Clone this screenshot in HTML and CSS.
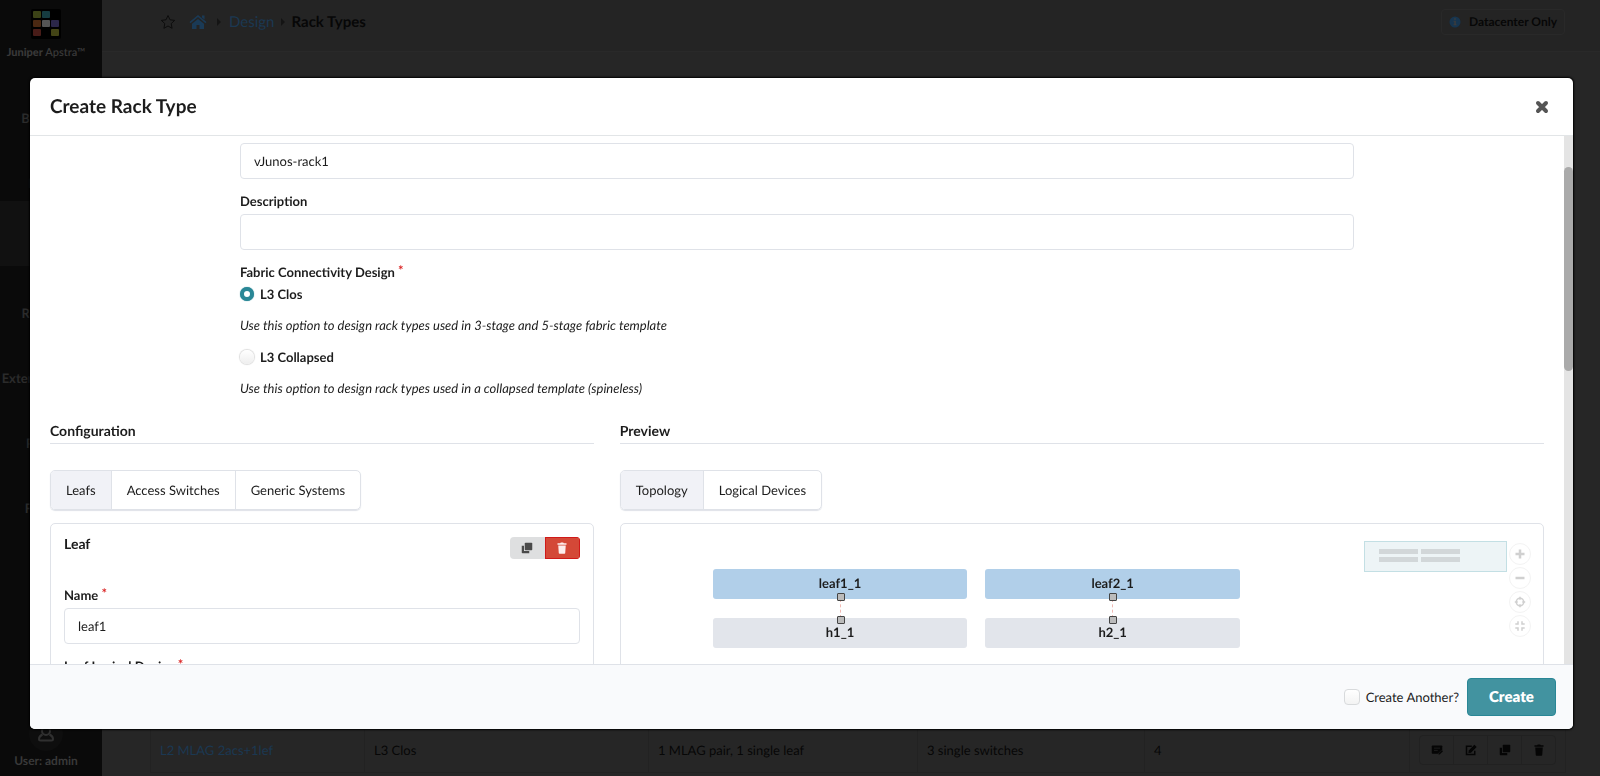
FILE: index.html
```html
<!DOCTYPE html>
<html lang="en">
<head>
  <meta charset="utf-8">
  <title>Create Rack Type</title>
  <link rel="stylesheet" href="styles.css">
</head>
<body>

  <svg class="sprite" aria-hidden="true">
    <symbol id="clone" viewBox="0 0 16 16">
      <rect x="5" y="1" width="10" height="10" rx="1"/>
      <path d="M1 5h3v7h7v3H2a1 1 0 0 1-1-1z"/>
    </symbol>
    <symbol id="trash" viewBox="0 0 16 16">
      <path d="M2 1.500h3.500l1-1h3l1 1H14v2H2zM3 4.500h10l-.7 10a1 1 0 0 1-1 1H4.700a1 1 0 0 1-1-1z"/>
    </symbol>
  </svg>

  <!-- Page behind the dialog -->
  <div class="page">
    <nav class="sidebar">
      <div class="brand">
        <svg class="logo" viewBox="0 0 30 30">
          <rect width="30" height="30" rx="2" fill="#000"/>
          <rect x="2" y="2" width="8" height="7" rx="1" fill="#3b4216"/>
          <rect x="11" y="2" width="8" height="7" rx="1" fill="#163c40"/>
          <rect x="2" y="11" width="8" height="7" rx="1" fill="#4a2812"/>
          <rect x="11" y="11" width="8" height="7" rx="1" fill="#555"/>
          <rect x="20" y="11" width="8" height="7" rx="1" fill="#2b2748"/>
          <rect x="2" y="20" width="8" height="7" rx="1" fill="#481c18"/>
          <rect x="20" y="20" width="8" height="7" rx="1" fill="#434416"/>
        </svg>
        <span><b>Juniper</b> Apstra™</span>
      </div>
      <a href="#" class="nav-item">Blueprints</a>
      <a href="#" class="nav-item">Devices</a>
      <a href="#" class="nav-item active">Design</a>
      <a href="#" class="nav-item">Resources</a>
      <a href="#" class="nav-item">External Systems</a>
      <a href="#" class="nav-item">Platform</a>
      <a href="#" class="nav-item">Favorites</a>
      <div class="user">
        <span class="avatar">
          <svg viewBox="0 0 16 16"><circle cx="8" cy="5" r="4"/><path d="M4.500 8.500C2.500 9.500 1 11 1 13q0 1.500 1.500 1.500h11Q15 14.500 15 13c0-2-1.500-3.500-3.500-4.500"/></svg>
        </span>
        <span>User: admin</span>
      </div>
    </nav>

    <main class="main">
      <header class="topbar">
        <svg class="star" viewBox="0 0 16 16"><path d="M8 1.500l2 4.300 4.700.6-3.500 3.200.9 4.700L8 12l-4.100 2.300.9-4.700L1.300 6.400 6 5.800z"/></svg>
        <svg class="home" viewBox="0 0 18 16"><path d="M9 1l8.500 7-1 1.200L9 3.100 1.500 9.200l-1-1.200z"/><path d="M13 1.500h2.500v4L13 3.500z"/><path d="M3 9.800l6-4.900 6 4.900V15h-4.500v-4h-3v4H3z"/></svg>
        <span class="sep"></span>
        <a href="#" class="crumb">Design</a>
        <span class="sep"></span>
        <b class="crumb">Rack Types</b>
        <span class="scope">
          <svg viewBox="0 0 12 12"><circle cx="6" cy="6" r="5.500" fill="#17354f"/><path d="M5.200 2.300h1.600v1.500H5.200zM4.500 4.800h2.300v3.400h.8v1H4.500v-1h.8V5.800h-.8z" fill="#3c3c3c"/></svg>
          Datacenter Only
        </span>
      </header>

      <table class="racks">
        <colgroup><col class="c-name"><col class="c-fabric"><col class="c-leafs"><col class="c-access"><col class="c-systems"><col class="c-actions"></colgroup>
        <tr>
          <td><a href="#">L2 MLAG 2acs+1lef</a></td>
          <td>L3 Clos</td>
          <td>1 MLAG pair, 1 single leaf</td>
          <td>3 single switches</td>
          <td>4</td>
          <td>
            <div class="actions">
              <button type="button" aria-label="Edit note"><svg viewBox="0 0 16 16"><path d="M2 2h12a1 1 0 0 1 1 1v4l-6 6H2a1 1 0 0 1-1-1V3a1 1 0 0 1 1-1z"/><path d="M10 12.500L14.500 8 16 9.500 11.500 14H10z"/><path d="M4 5.500h8M4 8.500h5" stroke="#262626"/></svg></button>
              <button type="button" aria-label="Edit"><svg viewBox="0 0 16 16"><path d="M9 3H2v11h11V9" fill="none" stroke="#050505" stroke-width="2"/><path d="M5 8.500L12.500 1 15.500 4 8 11.500l-3.500.5z"/></svg></button>
              <button type="button" aria-label="Clone"><svg><use href="#clone"/></svg></button>
              <button type="button" aria-label="Delete"><svg><use href="#trash"/></svg></button>
            </div>
          </td>
        </tr>
      </table>
    </main>
  </div>

  <!-- Dialog -->
  <div class="overlay">
    <form class="modal" role="dialog" aria-labelledby="modalTitle">
      <header class="modal-header">
        <h2 id="modalTitle">Create Rack Type</h2>
        <button type="button" class="close" aria-label="Close">
          <svg viewBox="0 0 14 14"><path d="M3 3l8 8M11 3l-8 8"/></svg>
        </button>
      </header>

      <div class="modal-body">
        <div class="scroll-area">
          <div class="general">
            <div class="field">
              <input type="text" id="rackName" aria-label="Name" value="vJunos-rack1">
            </div>
            <div class="field">
              <label for="description">Description</label>
              <input type="text" id="description">
            </div>
            <div class="fabric" role="radiogroup" aria-labelledby="fabricLabel">
              <span class="label" id="fabricLabel">Fabric Connectivity Design <span class="required">*</span></span>
              <div class="radio">
                <input type="radio" name="fabric" id="clos" checked>
                <label for="clos">L3 Clos</label>
              </div>
              <p class="hint">Use this option to design rack types used in 3-stage and 5-stage fabric template</p>
              <div class="radio">
                <input type="radio" name="fabric" id="collapsed">
                <label for="collapsed">L3 Collapsed</label>
              </div>
              <p class="hint">Use this option to design rack types used in a collapsed template (spineless)</p>
            </div>
          </div>

          <div class="columns">
            <section>
              <h3>Configuration</h3>
              <div class="tabs">
                <button type="button" class="active">Leafs</button>
                <button type="button">Access Switches</button>
                <button type="button">Generic Systems</button>
              </div>
              <div class="card">
                <div class="card-head">
                  <h4>Leaf</h4>
                  <div class="card-buttons">
                    <button type="button" aria-label="Clone leaf"><svg><use href="#clone"/></svg></button>
                    <button type="button" class="danger" aria-label="Delete leaf"><svg><use href="#trash"/></svg></button>
                  </div>
                </div>
                <div class="field">
                  <label for="leafName">Name <span class="required">*</span></label>
                  <input type="text" id="leafName" value="leaf1">
                </div>
                <div class="field">
                  <label for="leafDevice">Leaf Logical Device <span class="required">*</span></label>
                  <input type="text" id="leafDevice">
                </div>
              </div>
            </section>

            <section>
              <h3>Preview</h3>
              <div class="tabs">
                <button type="button" class="active">Topology</button>
                <button type="button">Logical Devices</button>
              </div>
              <div class="card preview">
                <div class="topology">
                  <div class="rack">
                    <div class="node leaf">leaf1_1</div>
                    <div class="link"></div>
                    <div class="node">h1_1</div>
                  </div>
                  <div class="rack">
                    <div class="node leaf">leaf2_1</div>
                    <div class="link"></div>
                    <div class="node">h2_1</div>
                  </div>
                </div>
                <div class="minimap"><i></i><i></i><i></i><i></i></div>
                <div class="zoom">
                  <button type="button" aria-label="Zoom in"><svg viewBox="0 0 12 12"><path d="M6 1.500v9M1.500 6h9" stroke-width="2.500"/></svg></button>
                  <button type="button" aria-label="Zoom out"><svg viewBox="0 0 12 12"><path d="M1.500 6h9" stroke-width="2.500"/></svg></button>
                  <button type="button" aria-label="Center"><svg viewBox="0 0 12 12"><circle cx="6" cy="6" r="3.700" stroke-width="1.500"/><path d="M6 .8v3M6 8.200v3M.8 6h3M8.200 6h3" stroke-width="1.500"/></svg></button>
                  <button type="button" aria-label="Fit"><svg viewBox="0 0 12 12"><path d="M4 1.300V4H1.300M8 1.300V4h2.700M4 10.700V8H1.300M8 10.700V8h2.700" stroke-width="1.500"/></svg></button>
                </div>
              </div>
            </section>
          </div>
        </div>
        <div class="scrollbar"><div class="thumb"></div></div>
      </div>

      <footer class="modal-footer">
        <input type="checkbox" id="another">
        <label for="another">Create Another?</label>
        <button type="submit" class="primary">Create</button>
      </footer>
    </form>
  </div>

</body>
</html>
```
FILE: styles.css
```css
* {
  box-sizing: border-box;
}

body {
  margin: 0;
  height: 100vh;
  overflow: hidden;
  font-family: Lato, sans-serif;
  font-size: 13px;
  line-height: 20px;
  text-rendering: geometricPrecision;
  color: #1c1c1c;
  background: #262626;
}

h2, h3, h4, p {
  margin: 0;
}

a {
  text-decoration: none;
}

button,
input {
  font: inherit;
  color: inherit;
  text-rendering: inherit;
  margin: 0;
}

button {
  display: flex;
  align-items: center;
  justify-content: center;
  padding: 0;
  border: none;
  background: none;
  cursor: pointer;
}

.sprite {
  display: none;
}

/* Page behind the dialog */
.page {
  display: flex;
  height: 100vh;
  color: #070707;
}

.sidebar {
  display: flex;
  flex-direction: column;
  width: 102px;
  flex: none;
  background: #0a0a0a;
  color: #393939;
  font-size: 12px;
  font-weight: bold;
  text-align: center;
  padding-right: 10px;
}

.brand {
  height: 70px;
  padding-top: 9px;
  font-size: 11px;
  font-weight: 600;
  white-space: nowrap;
  margin-bottom: 1px;
}

.logo {
  display: block;
  width: 30px;
  height: 30px;
  margin: 0 auto 4px;
}

.nav-item {
  height: 65px;
  flex: none;
  padding-top: 37px;
  margin-right: -10px;
  color: #2b2b2b;
  font-size: 13px;
  white-space: nowrap;
}

.nav-item.active {
  background: #111;
}

.user {
  display: flex;
  flex-direction: column;
  align-items: center;
  margin-top: auto;
  padding-bottom: 5px;
}

.avatar {
  display: flex;
  align-items: center;
  justify-content: center;
  width: 34px;
  height: 34px;
  border-radius: 50%;
  background: #0e0e0e;
}

.avatar svg {
  width: 16px;
  height: 16px;
  fill: none;
  stroke: #303030;
  stroke-width: 2;
}

.main {
  display: flex;
  flex-direction: column;
  justify-content: space-between;
  flex: 1;
}

.topbar {
  display: flex;
  align-items: center;
  height: 52px;
  padding: 0 35px 8px 58px;
  border-bottom: 1px solid #292929;
  background: #242424;
  font-size: 15px;
}

.star {
  width: 16px;
  height: 16px;
  margin-right: 13px;
  fill: none;
  stroke: #0c0c0c;
}

.home {
  width: 18px;
  height: 16px;
  fill: #1a3a56;
}

.sep {
  border: 4px solid transparent;
  border-left-color: #141414;
  border-right-width: 0;
  margin: 0 8px 0 10px;
}

.crumb {
  color: #070707;
}

a.crumb,
.racks a {
  color: #1b3852;
}

.crumb + .sep {
  margin: 0 7px 0 6px;
}

.scope {
  display: flex;
  align-items: center;
  gap: 8px;
  margin-left: auto;
  height: 26px;
  padding: 0 7px;
  border: 1px solid #292929;
  border-radius: 4px;
  font-size: 12px;
  font-weight: bold;
}

.scope svg {
  width: 12px;
  height: 12px;
}

.racks {
  table-layout: fixed;
  border-collapse: collapse;
  width: calc(100% - 82px);
  margin: 0 34px 3px 48px;
}

.racks td {
  height: 46px;
  padding: 0 9px;
  border: 1px solid #222;
}

.c-name { width: 214px; }
.c-fabric { width: 284px; }
.c-leafs { width: 269px; }
.c-access { width: 227px; }
.c-actions { width: 156px; }

.actions {
  display: flex;
  height: 30px;
  border: 1px solid #212121;
  border-radius: 4px;
}

.actions button {
  flex: 1;
}

.actions button + button {
  border-left: 1px solid #212121;
}

.actions svg {
  width: 12px;
  height: 12px;
  fill: #050505;
}

/* Dialog */
.overlay {
  position: fixed;
  inset: 0;
  display: flex;
  padding: 78px 27px 47px 30px;
}

.modal {
  display: flex;
  flex-direction: column;
  flex: 1;
  min-width: 0;
  overflow: hidden;
  background: #fff;
  border-radius: 5px;
  box-shadow: 0 0 2px 1px #000;
}

.modal-header {
  display: flex;
  align-items: center;
  justify-content: space-between;
  height: 58px;
  flex: none;
  padding: 0 24px 0 20px;
  border-bottom: 1px solid #e2e5e7;
}

.modal-header h2 {
  font-size: 19px;
  line-height: 24px;
  font-weight: bold;
}

.close svg {
  width: 14px;
  height: 14px;
  stroke: #555;
  stroke-width: 4;
  stroke-linecap: round;
}

.modal-body {
  display: flex;
  flex: 1;
  min-height: 0;
}

.scroll-area {
  flex: 1;
  min-width: 0;
  overflow: hidden;
  padding: 7px 20px 20px;
}

.scrollbar {
  width: 9px;
  padding-top: 31px;
  background: #e4e4e4;
}

.thumb {
  height: 41%;
  border-radius: 5px;
  background: #aaa;
}

.general {
  padding: 0 190px;
}

.field {
  margin-bottom: 12px;
}

.field label,
.label {
  display: block;
  margin-bottom: 3px;
  font-weight: bold;
}

.fabric .label {
  margin-bottom: 2px;
}

.field input {
  display: block;
  width: 100%;
  height: 36px;
  padding: 0 13px;
  border: 1px solid #dfe2e8;
  border-radius: 4px;
  background: #fff;
  outline: none;
}

.required {
  color: #db2828;
  vertical-align: 2px;
  line-height: 12px;
}

.radio {
  display: flex;
  align-items: center;
  gap: 6px;
  font-weight: bold;
}

.radio input {
  appearance: none;
  width: 14px;
  height: 14px;
  border-radius: 50%;
  background: linear-gradient(#fff, #eee);
  box-shadow: 0 0 1px 1px #ddd;
}

.radio input:checked {
  border: 4px solid #2a8796;
  background: #fff;
  box-shadow: 0 0 1px #2a8796;
}

.hint {
  margin: 11px 0 12px;
  font-style: italic;
}

.columns {
  display: grid;
  grid-template-columns: 10fr 17fr;
  gap: 26px;
  margin-top: 23px;
}

.columns h3 {
  padding-bottom: 2px;
  border-bottom: 1px solid #dfe2e8;
  font-size: 14px;
  font-weight: bold;
}

.tabs {
  display: inline-flex;
  margin: 26px 0 13px;
  vertical-align: top;
  border: 1px solid #dfe2e8;
  border-radius: 5px;
  box-shadow: 0 1px 1px #dfe2e8;
  overflow: hidden;
}

.tabs button {
  height: 38px;
  padding: 0 15px;
}

.tabs button + button {
  border-left: 1px solid #dfe2e8;
}

.tabs .active {
  background: #f1f2f7;
}

.card {
  padding: 13px;
  border: 1px solid #dfe2e8;
  border-radius: 5px;
}

.card-head {
  display: flex;
  align-items: flex-start;
  justify-content: space-between;
  margin-bottom: 26px;
}

.card-head h4 {
  font-size: 14px;
  font-weight: bold;
  line-height: 14px;
}

.card-buttons {
  display: flex;
  overflow: hidden;
  border-radius: 4px;
}

.card-buttons button {
  width: 35px;
  height: 22px;
  background: #dedfe0;
}

.card-buttons .danger {
  background: #d44837;
  border: 1px solid #d01919;
}

.card-buttons svg {
  width: 12px;
  height: 12px;
  fill: #4a4a4a;
}

.card-buttons .danger svg {
  fill: #fdeeee;
}

.preview {
  display: flex;
  align-items: flex-start;
  min-height: 225px;
  padding: 17px 12px 0 92px;
}

.topology {
  display: grid;
  grid-template-columns: 1fr 1fr;
  gap: 18px;
  flex: 1;
  padding-top: 28px;
  margin-right: 124px;
}

.node {
  height: 30px;
  border-radius: 3px;
  background: #e2e5eb;
  font-weight: bold;
  line-height: 28px;
  text-align: center;
}

.node.leaf {
  background: #b1cfe9;
}

/* Cable with a port square at each end */
.link {
  position: relative;
  height: 19px;
  width: 1px;
  margin: 0 auto;
  border-left: 1px dashed #f0b9b3;
}

.link::before,
.link::after {
  content: "";
  position: absolute;
  left: -4px;
  width: 6px;
  height: 6px;
  border: 1px solid #444;
  border-radius: 1px;
  background: #bbb;
}

.link::before {
  top: -6px;
}

.link::after {
  bottom: -6px;
}

.minimap {
  display: grid;
  grid-template-columns: 39px 39px;
  grid-auto-rows: 5px;
  gap: 3px;
  width: 143px;
  height: 31px;
  padding: 7px 14px;
  border: 1px solid #c3dfe4;
  background: #edf4f6;
}

.minimap i {
  background: #d2d7d9;
}

.zoom {
  display: flex;
  flex-direction: column;
  gap: 2px;
  margin: 2px 0 0 2px;
}

.zoom button {
  width: 22px;
  height: 22px;
  border: 1px solid #f3f3f3;
  border-radius: 50%;
}

.zoom svg {
  width: 12px;
  height: 12px;
  fill: none;
  stroke: #d0d0d0;
}

.modal-footer {
  display: flex;
  align-items: center;
  justify-content: flex-end;
  height: 65px;
  flex: none;
  padding: 0 17px;
  border-top: 1px solid #dfe2e8;
  background: #f9fafc;
}

.modal-footer input {
  appearance: none;
  width: 16px;
  height: 16px;
  border: 1px solid #d8dadc;
  border-radius: 4px;
  background: linear-gradient(#fff, #f3f3f3);
}

.modal-footer label {
  margin: 0 8px 0 6px;
}

.primary {
  width: 89px;
  height: 38px;
  border: 1px solid #2a8796;
  border-radius: 4px;
  background: #4293a0;
  color: #fff;
  font-size: 15px;
  font-weight: 800;
}
```
